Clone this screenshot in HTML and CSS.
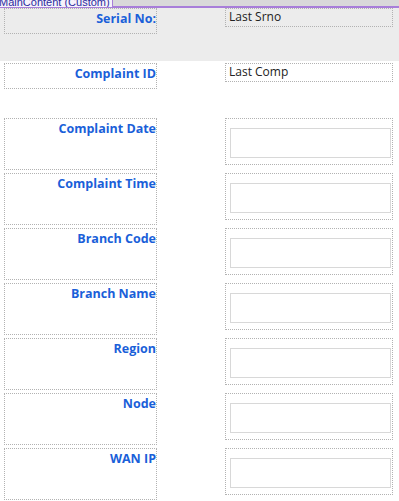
FILE: index.html
```html
<!DOCTYPE html>
<html>
<head>
<meta charset="utf-8">
<link rel="stylesheet" href="styles.css">
</head>
<body>
<div class="tagbar"><span class="tag">MainContent (Custom)</span></div>
<div class="form">
  <div class="row row-gray">
    <div class="lbl-cell lbl-short">Serial No:</div>
    <div class="val-cell">Last Srno</div>
  </div>
  <div class="row row-top">
    <div class="lbl-cell lbl-short">Complaint ID</div>
    <div class="val-cell">Last Comp</div>
  </div>
  <div class="row row-field">
    <div class="lbl-cell">Complaint Date</div>
    <div class="box-cell"><div class="input"></div></div>
  </div>
  <div class="row row-field">
    <div class="lbl-cell">Complaint Time</div>
    <div class="box-cell"><div class="input"></div></div>
  </div>
  <div class="row row-field">
    <div class="lbl-cell">Branch Code</div>
    <div class="box-cell"><div class="input"></div></div>
  </div>
  <div class="row row-field">
    <div class="lbl-cell">Branch Name</div>
    <div class="box-cell"><div class="input"></div></div>
  </div>
  <div class="row row-field">
    <div class="lbl-cell">Region</div>
    <div class="box-cell"><div class="input"></div></div>
  </div>
  <div class="row row-field">
    <div class="lbl-cell">Node</div>
    <div class="box-cell"><div class="input"></div></div>
  </div>
  <div class="row row-field">
    <div class="lbl-cell">WAN IP</div>
    <div class="box-cell"><div class="input"></div></div>
  </div>
</div>
</body>
</html>
```

FILE: styles.css
```css
html, body {
  margin: 0;
  padding: 0;
  background: #ffffff;
  overflow: hidden;
}
body {
  font-family: "Open Sans", "Liberation Sans", sans-serif;
}
.tagbar {
  position: relative;
  height: 6px;
  background: #d9d9d9;
  border-bottom: 2px solid #a87ed9;
}
.tag {
  position: absolute;
  left: -2px;
  bottom: -2px;
  height: 14px;
  box-sizing: border-box;
  padding: 1px 2px 0 0;
  background: #f6f2fb;
  border: 1px solid #a87ed9;
  font-family: "Liberation Sans", Arial, sans-serif;
  font-size: 11px;
  line-height: 12px;
  color: #2c2c9e;
  white-space: nowrap;
  overflow: hidden;
}
.row {
  display: grid;
  grid-template-columns: 153px 168px;
  column-gap: 68px;
  padding-left: 4px;
  align-items: start;
  box-sizing: border-box;
}
.row-gray {
  background: #ececec;
  height: 53px;
}
.row-top {
  height: 57px;
  padding-top: 2px;
}
.row-field {
  height: 55px;
}
.lbl-cell {
  box-sizing: border-box;
  height: 52px;
  border: 1px dotted #b2b2b2;
  text-align: right;
  font-size: 12.5px;
  font-weight: 700;
  line-height: 16px;
  padding-top: 2px;
  color: #1a5fd9;
  white-space: nowrap;
}
.lbl-short {
  height: 26px;
}
.val-cell {
  box-sizing: border-box;
  height: 19px;
  border: 1px dotted #b2b2b2;
  padding-left: 3px;
  font-size: 12px;
  line-height: 16px;
  color: #222222;
}
.box-cell {
  box-sizing: border-box;
  height: 47px;
  border: 1px dotted #b2b2b2;
  padding: 9px 1px 6px 4px;
}
.input {
  box-sizing: border-box;
  height: 30px;
  border: 1px solid #d8d8d8;
  background: #ffffff;
}
```
